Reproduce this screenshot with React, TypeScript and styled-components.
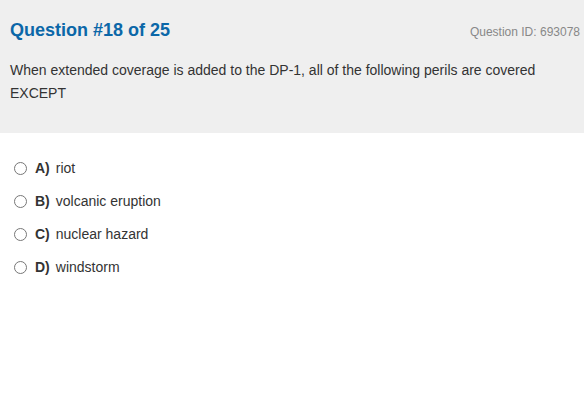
import React from "react";
import styled, { createGlobalStyle } from "styled-components";

const GlobalStyle = createGlobalStyle`
  html, body {
    margin: 0;
    padding: 0;
    background: #fff;
    font-family: "Liberation Sans", Arial, sans-serif;
  }
`;

const Header = styled.div`
  background: #efefef;
  padding: 20px 4px 28px 10px;
`;

const TitleRow = styled.div`
  display: flex;
  justify-content: space-between;
  align-items: baseline;
`;

const Title = styled.h2`
  margin: 0;
  font-size: 18px;
  font-weight: bold;
  color: #0b67a8;
`;

const QuestionId = styled.span`
  font-size: 12px;
  color: #888;
`;

const Stem = styled.p`
  margin: 18px 0 0;
  font-size: 14px;
  line-height: 23px;
  color: #333;
`;

const Options = styled.div`
  display: flex;
  flex-direction: column;
  gap: 13px;
  padding: 25px 0 0 14px;
`;

const Option = styled.label`
  display: flex;
  align-items: center;
  gap: 8px;
  font-size: 14px;
  height: 20px;
  color: #333;
`;

const Radio = styled.span`
  width: 11px;
  height: 11px;
  border: 1px solid #777;
  border-radius: 50%;
  background: #fff;
`;

const Letter = styled.b`
  margin-right: 6px;
`;

const choices = [
  ["A)", "riot"],
  ["B)", "volcanic eruption"],
  ["C)", "nuclear hazard"],
  ["D)", "windstorm"],
];

export default function App() {
  return (
    <>
      <GlobalStyle />
      <Header>
        <TitleRow>
          <Title>Question #18 of 25</Title>
          <QuestionId>Question ID: 693078</QuestionId>
        </TitleRow>
        <Stem>
          When extended coverage is added to the DP-1, all of the following perils are covered
          EXCEPT
        </Stem>
      </Header>
      <Options>
        {choices.map(([l, t]) => (
          <Option key={l}>
            <Radio />
            <span>
              <Letter>{l}</Letter>
              {t}
            </span>
          </Option>
        ))}
      </Options>
    </>
  );
}
